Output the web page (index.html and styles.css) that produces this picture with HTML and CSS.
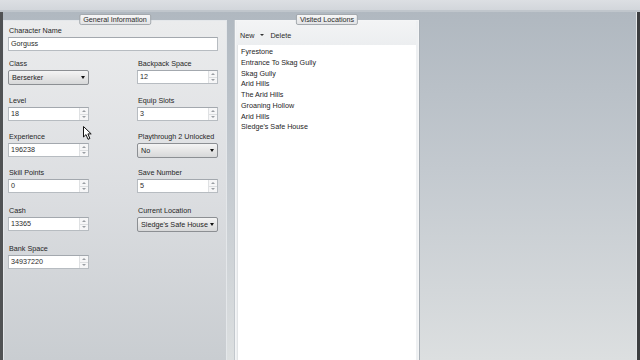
FILE: index.html
```html
<!DOCTYPE html>
<html lang="en">
<head>
    <meta charset="UTF-8">
    <meta name="viewport" content="width=device-width, initial-scale=1.0">
    <title>Save Editor</title>
    <link rel="stylesheet" href="styles.css">
</head>
<body>
    <div class="screen">
        <div class="topbar"></div>

        <div class="window">
            <div class="edge-left"></div>

            <!-- General Information group -->
            <section class="group general">
                <div class="group-title">General Information</div>
                <div class="form">
                    <div class="field wide">
                        <label>Character Name</label>
                        <div class="textbox">Gorguss</div>
                    </div>

                    <div class="field">
                        <label>Class</label>
                        <div class="combo">Berserker<span class="combo-arrow"></span></div>
                    </div>
                    <div class="field">
                        <label>Backpack Space</label>
                        <div class="textbox spinbox"><span class="value">12</span><span class="spin"><span class="up"></span><span class="down"></span></span></div>
                    </div>

                    <div class="field">
                        <label>Level</label>
                        <div class="textbox spinbox"><span class="value">18</span><span class="spin"><span class="up"></span><span class="down"></span></span></div>
                    </div>
                    <div class="field">
                        <label>Equip Slots</label>
                        <div class="textbox spinbox"><span class="value">3</span><span class="spin"><span class="up"></span><span class="down"></span></span></div>
                    </div>

                    <div class="field">
                        <label>Experience</label>
                        <div class="textbox spinbox"><span class="value">196238</span><span class="spin"><span class="up"></span><span class="down"></span></span></div>
                    </div>
                    <div class="field">
                        <label>Playthrough 2 Unlocked</label>
                        <div class="combo">No<span class="combo-arrow"></span></div>
                    </div>

                    <div class="field">
                        <label>Skill Points</label>
                        <div class="textbox spinbox"><span class="value">0</span><span class="spin"><span class="up"></span><span class="down"></span></span></div>
                    </div>
                    <div class="field">
                        <label>Save Number</label>
                        <div class="textbox spinbox"><span class="value">5</span><span class="spin"><span class="up"></span><span class="down"></span></span></div>
                    </div>

                    <div class="field">
                        <label>Cash</label>
                        <div class="textbox spinbox"><span class="value">13365</span><span class="spin"><span class="up"></span><span class="down"></span></span></div>
                    </div>
                    <div class="field">
                        <label>Current Location</label>
                        <div class="combo">Sledge's Safe House<span class="combo-arrow"></span></div>
                    </div>

                    <div class="field">
                        <label>Bank Space</label>
                        <div class="textbox spinbox"><span class="value">34937220</span><span class="spin"><span class="up"></span><span class="down"></span></span></div>
                    </div>
                </div>
            </section>

            <!-- Visited Locations group -->
            <section class="group visited">
                <div class="group-title">Visited Locations</div>
                <div class="toolbar">
                    <span>New</span>
                    <span class="drop-arrow"></span>
                    <span>Delete</span>
                </div>
                <ul class="location-list">
                    <li>Fyrestone</li>
                    <li>Entrance To Skag Gully</li>
                    <li>Skag Gully</li>
                    <li>Arid Hills</li>
                    <li>The Arid Hills</li>
                    <li>Groaning Hollow</li>
                    <li>Arid Hills</li>
                    <li>Sledge's Safe House</li>
                </ul>
            </section>

            <div class="filler"></div>
            <div class="edge-right"></div>
        </div>

        <!-- Mouse pointer -->
        <svg class="cursor" width="10" height="15" viewBox="0 0 10 15">
            <path d="M0.5 0.5 L0.5 11 L3 8.6 L5 13.3 L6.9 12.5 L4.9 7.9 L8.2 7.9 Z" fill="#fff" stroke="#111" stroke-width="1" stroke-linejoin="round"/>
        </svg>
    </div>
</body>
</html>
```

FILE: styles.css
```css
body {
    margin: 0;
    font-family: 'Liberation Sans', Arial, sans-serif;
    font-size: 7.2px;
    color: #262626;
}

.screen {
    position: relative;
    width: 640px;
    height: 360px;
    overflow: hidden;
    display: flex;
    flex-direction: column;
}

.topbar {
    flex-shrink: 0;
    height: 10px;
    background: linear-gradient(#dcdfe3, #d2d6db);
    border-bottom: 2px solid #c0c6cc;
}

.window {
    flex: 1;
    min-height: 0;
    display: flex;
    background: linear-gradient(#b0b8c0, #c3c9cf 45%, #dcdfe0);
}

.edge-left {
    width: 3px;
    background: #505254;
}

.edge-right {
    width: 3px;
    background: #3c3e40;
    border-left: 1px solid #e3e6e8;
}

.filler {
    flex: 1;
}

/* Group boxes */
.group {
    position: relative;
    margin-top: 8px;
    border: 1px solid #e4e7ea;
    border-bottom: none;
}

.group-title {
    position: absolute;
    top: -7px;
    left: 50%;
    transform: translateX(-50%);
    padding: 0 3px;
    line-height: 9px;
    white-space: nowrap;
    background: linear-gradient(#f6f6f6, #e3e4e6);
    border: 1px solid #a4a9ae;
    border-radius: 2px;
    color: #2a2a2a;
}

.general {
    width: 222px;
    background: linear-gradient(#ebeced, #dcdee1 50%, #c9cdd1);
}

.visited {
    width: 179px;
    margin-left: 8px;
    padding: 0 2px 0 1px;
    display: flex;
    flex-direction: column;
    background: #eef0f2;
    border-color: #f4f5f6;
    box-shadow: 1px 0 0 #a9b0b7, -1px 0 0 #c3c8cd;
}

/* Form grid */
.form {
    display: grid;
    grid-template-columns: 81px 81px;
    grid-template-rows: 33px 37px 36px 36px 38px 38px auto;
    column-gap: 48px;
    padding: 5px 0 0 4px;
}

.field.wide {
    grid-column: 1 / 3;
}

.field label {
    display: block;
    height: 9px;
    line-height: 9px;
    margin: 0 0 2px 1px;
    white-space: nowrap;
}

.textbox {
    box-sizing: border-box;
    height: 14px;
    line-height: 12px;
    padding-left: 2px;
    background: #fff;
    border: 1px solid #b7bcc1;
    border-top-color: #a3a8ae;
    color: #2a2a2a;
}

.spinbox {
    display: flex;
    padding-right: 0;
}

.spinbox .value {
    flex: 1;
}

.spin {
    width: 8px;
    display: flex;
    flex-direction: column;
    border-left: 1px solid #dfe1e3;
    background: #f6f6f7;
}

.spin .up,
.spin .down {
    flex: 1;
    display: flex;
    align-items: center;
    justify-content: center;
}

.spin .up {
    border-bottom: 1px solid #dcdee0;
}

.spin .up::after {
    content: "";
    border-left: 2px solid transparent;
    border-right: 2px solid transparent;
    border-bottom: 2px solid #9a9ea3;
}

.spin .down::after {
    content: "";
    border-left: 2px solid transparent;
    border-right: 2px solid transparent;
    border-top: 2px solid #9a9ea3;
}

.combo {
    box-sizing: border-box;
    height: 15px;
    line-height: 13px;
    padding-left: 3px;
    display: flex;
    justify-content: space-between;
    align-items: center;
    white-space: nowrap;
    background: linear-gradient(#f4f4f4, #e6e6e6 50%, #d7d8d9);
    border: 1px solid #8c8f93;
    border-radius: 2px;
    color: #1e1e1e;
}

.combo-arrow {
    margin-right: 3px;
    border-left: 2.5px solid transparent;
    border-right: 2.5px solid transparent;
    border-top: 3px solid #111;
}

/* Visited locations */
.toolbar {
    flex-shrink: 0;
    height: 24px;
    padding: 4px 0 0 3px;
    box-sizing: border-box;
    display: flex;
    align-items: center;
    gap: 5px;
    background: linear-gradient(#f3f4f5, #eceef0);
    color: #2a2a2a;
}

.drop-arrow {
    margin: 0 1px;
    border-left: 2px solid transparent;
    border-right: 2px solid transparent;
    border-top: 2px solid #333;
}

.location-list {
    flex: 1;
    list-style: none;
    margin: 0;
    padding: 2px 0 0 3px;
    background: #fff;
    border-left: 1px solid #e2e4e6;
    line-height: 10.75px;
    color: #1e1e1e;
}

.cursor {
    position: absolute;
    left: 83px;
    top: 126px;
}
```
